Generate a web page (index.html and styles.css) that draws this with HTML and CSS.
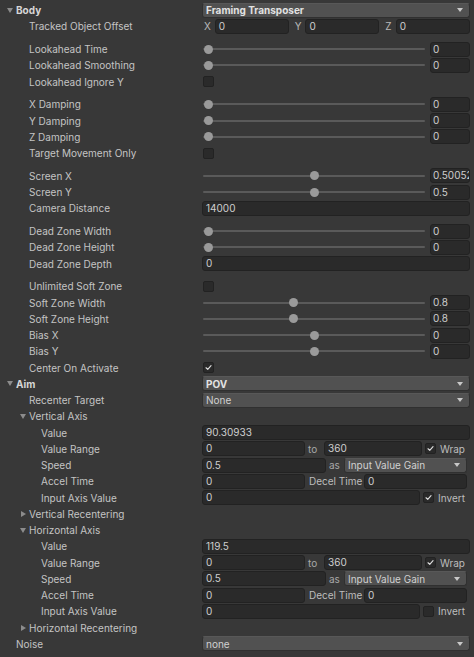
FILE: index.html
```html
<!DOCTYPE html>
<html lang="en">
<head>
    <meta charset="UTF-8">
    <title>Inspector - CinemachineVirtualCamera</title>
    <link rel="stylesheet" href="styles.css">
</head>
<body>
<div class="inspector">
    <!-- Body -->
    <div class="row">
        <div class="label l0 fold open bold"><span class="arrow"></span>Body</div>
        <div class="field"><div class="popup bold"><span class="popup-text">Framing Transposer</span><span class="popup-arrow"></span></div></div>
    </div>
    <div class="row">
        <div class="label l1">Tracked Object Offset</div>
        <div class="field vec3">
            <div class="axis"><span class="axis-name">X</span><div class="box">0</div></div>
            <div class="axis"><span class="axis-name">Y</span><div class="box">0</div></div>
            <div class="axis"><span class="axis-name">Z</span><div class="box">0</div></div>
        </div>
    </div>
    <div class="space"></div>
    <div class="row">
        <div class="label l1">Lookahead Time</div>
        <div class="field"><div class="slider"><span class="thumb" style="--v:0"></span></div><div class="box num">0</div></div>
    </div>
    <div class="row">
        <div class="label l1">Lookahead Smoothing</div>
        <div class="field"><div class="slider"><span class="thumb" style="--v:0"></span></div><div class="box num">0</div></div>
    </div>
    <div class="row">
        <div class="label l1">Lookahead Ignore Y</div>
        <div class="field"><span class="check"></span></div>
    </div>
    <div class="space"></div>
    <div class="row">
        <div class="label l1">X Damping</div>
        <div class="field"><div class="slider"><span class="thumb" style="--v:0"></span></div><div class="box num">0</div></div>
    </div>
    <div class="row">
        <div class="label l1">Y Damping</div>
        <div class="field"><div class="slider"><span class="thumb" style="--v:0"></span></div><div class="box num">0</div></div>
    </div>
    <div class="row">
        <div class="label l1">Z Damping</div>
        <div class="field"><div class="slider"><span class="thumb" style="--v:0"></span></div><div class="box num">0</div></div>
    </div>
    <div class="row">
        <div class="label l1">Target Movement Only</div>
        <div class="field"><span class="check"></span></div>
    </div>
    <div class="space"></div>
    <div class="row">
        <div class="label l1">Screen X</div>
        <div class="field"><div class="slider"><span class="thumb" style="--v:0.5"></span></div><div class="box num">0.50052</div></div>
    </div>
    <div class="row">
        <div class="label l1">Screen Y</div>
        <div class="field"><div class="slider"><span class="thumb" style="--v:0.5"></span></div><div class="box num">0.5</div></div>
    </div>
    <div class="row">
        <div class="label l1">Camera Distance</div>
        <div class="field"><div class="box">14000</div></div>
    </div>
    <div class="space"></div>
    <div class="row">
        <div class="label l1">Dead Zone Width</div>
        <div class="field"><div class="slider"><span class="thumb" style="--v:0"></span></div><div class="box num">0</div></div>
    </div>
    <div class="row">
        <div class="label l1">Dead Zone Height</div>
        <div class="field"><div class="slider"><span class="thumb" style="--v:0"></span></div><div class="box num">0</div></div>
    </div>
    <div class="row">
        <div class="label l1">Dead Zone Depth</div>
        <div class="field"><div class="box">0</div></div>
    </div>
    <div class="space"></div>
    <div class="row">
        <div class="label l1">Unlimited Soft Zone</div>
        <div class="field"><span class="check"></span></div>
    </div>
    <div class="row">
        <div class="label l1">Soft Zone Width</div>
        <div class="field"><div class="slider"><span class="thumb" style="--v:0.4"></span></div><div class="box num">0.8</div></div>
    </div>
    <div class="row">
        <div class="label l1">Soft Zone Height</div>
        <div class="field"><div class="slider"><span class="thumb" style="--v:0.4"></span></div><div class="box num">0.8</div></div>
    </div>
    <div class="row">
        <div class="label l1">Bias X</div>
        <div class="field"><div class="slider"><span class="thumb" style="--v:0.5"></span></div><div class="box num">0</div></div>
    </div>
    <div class="row">
        <div class="label l1">Bias Y</div>
        <div class="field"><div class="slider"><span class="thumb" style="--v:0.5"></span></div><div class="box num">0</div></div>
    </div>
    <div class="row">
        <div class="label l1">Center On Activate</div>
        <div class="field"><span class="check on"><svg viewBox="0 0 11 11"><polyline points="2.5,5.8 4.6,7.8 8.6,3.2"/></svg></span></div>
    </div>

    <!-- Aim -->
    <div class="row">
        <div class="label l0 fold open bold"><span class="arrow"></span>Aim</div>
        <div class="field"><div class="popup bold"><span class="popup-text">POV</span><span class="popup-arrow"></span></div></div>
    </div>
    <div class="row">
        <div class="label l1">Recenter Target</div>
        <div class="field"><div class="popup"><span class="popup-text">None</span><span class="popup-arrow"></span></div></div>
    </div>
    <div class="row">
        <div class="label l1 fold open"><span class="arrow"></span>Vertical Axis</div>
    </div>
    <div class="row">
        <div class="label l2">Value</div>
        <div class="field"><div class="box">90.30933</div></div>
    </div>
    <div class="row">
        <div class="label l2">Value Range</div>
        <div class="field">
            <div class="box half">0</div><span class="word to">to</span><div class="box">360</div>
            <span class="check on"><svg viewBox="0 0 11 11"><polyline points="2.5,5.8 4.6,7.8 8.6,3.2"/></svg></span><span class="word tail">Wrap</span>
        </div>
    </div>
    <div class="row">
        <div class="label l2">Speed</div>
        <div class="field">
            <div class="box wide">0.5</div><span class="word as">as</span>
            <div class="popup inset"><span class="popup-text">Input Value Gain</span><span class="popup-arrow"></span></div>
        </div>
    </div>
    <div class="row">
        <div class="label l2">Accel Time</div>
        <div class="field">
            <div class="box half">0</div><span class="word decel">Decel Time</span><div class="box inset">0</div>
        </div>
    </div>
    <div class="row">
        <div class="label l2">Input Axis Value</div>
        <div class="field">
            <div class="box">0</div>
            <span class="check on"><svg viewBox="0 0 11 11"><polyline points="2.5,5.8 4.6,7.8 8.6,3.2"/></svg></span><span class="word tail">Invert</span>
        </div>
    </div>
    <div class="row">
        <div class="label l1 fold"><span class="arrow"></span>Vertical Recentering</div>
    </div>
    <div class="row">
        <div class="label l1 fold open"><span class="arrow"></span>Horizontal Axis</div>
    </div>
    <div class="row">
        <div class="label l2">Value</div>
        <div class="field"><div class="box">119.5</div></div>
    </div>
    <div class="row">
        <div class="label l2">Value Range</div>
        <div class="field">
            <div class="box half">0</div><span class="word to">to</span><div class="box">360</div>
            <span class="check on"><svg viewBox="0 0 11 11"><polyline points="2.5,5.8 4.6,7.8 8.6,3.2"/></svg></span><span class="word tail">Wrap</span>
        </div>
    </div>
    <div class="row">
        <div class="label l2">Speed</div>
        <div class="field">
            <div class="box wide">0.5</div><span class="word as">as</span>
            <div class="popup inset"><span class="popup-text">Input Value Gain</span><span class="popup-arrow"></span></div>
        </div>
    </div>
    <div class="row">
        <div class="label l2">Accel Time</div>
        <div class="field">
            <div class="box half">0</div><span class="word decel">Decel Time</span><div class="box inset">0</div>
        </div>
    </div>
    <div class="row">
        <div class="label l2">Input Axis Value</div>
        <div class="field">
            <div class="box">0</div>
            <span class="check"></span><span class="word tail">Invert</span>
        </div>
    </div>
    <div class="row">
        <div class="label l1 fold"><span class="arrow"></span>Horizontal Recentering</div>
    </div>

    <!-- Noise -->
    <div class="row">
        <div class="label l0b">Noise</div>
        <div class="field"><div class="popup"><span class="popup-text">none</span><span class="popup-arrow"></span></div></div>
    </div>
</div>
</body>
</html>
```

FILE: styles.css
```css
:root { --bg: #383838; --text: #c4c4c4; --bright: #d6d6d6; --field: #2a2a2a; --field-border: #222; --popup: #515151; --muted: #8c8c8c; }
* { box-sizing: border-box; }
body { margin: 0; background: var(--bg); color: var(--text); font-family: Inter, "Noto Sans", sans-serif; font-size: 10px; }
.inspector { padding: 2px 4px 0 0; }
.row { display: flex; align-items: center; height: 16.25px; }
.space { height: 6.5px; }

/* labels + foldouts */
.label { width: 202px; flex: none; display: flex; align-items: center; white-space: nowrap; overflow: hidden; }
.l0 { padding-left: 7px; }
.l0b { padding-left: 16px; }
.l1 { padding-left: 29px; }
.l2 { padding-left: 41px; }
.l1.fold { padding-left: 20px; }
.bold { font-weight: 700; color: var(--bright); }
.arrow { width: 9px; flex: none; display: flex; align-items: center; }
.arrow::before { content: ''; border-style: solid; border-color: transparent; border-width: 3px 0 3px 5px; border-left-color: var(--muted); margin-left: 1px; }
.fold.open .arrow::before { border-width: 5px 3px 0 3px; border-color: var(--muted) transparent transparent transparent; margin-left: 0; }

/* value column */
.field { flex: 1; min-width: 0; display: flex; align-items: center; height: 15px; }
.box { flex: 1; min-width: 0; height: 15px; line-height: 13px; padding: 0 3px; background: var(--field); border: 1px solid var(--field-border); border-radius: 3px; color: #cfcfcf; white-space: nowrap; overflow: hidden; }
.box.num { flex: none; width: 40px; margin-left: 5px; padding: 0 2px; }
.box.half { flex: none; width: 103px; }
.box.wide { flex: none; width: 124px; }
.box.inset { margin-right: 3px; }

.popup { flex: 1; min-width: 0; height: 15px; display: flex; align-items: center; padding: 0 6px 0 3px; background: var(--popup); border: 1px solid #303030; border-top-color: #585858; border-radius: 3px; color: #d0d0d0; }
.popup.bold { color: #e2e2e2; }
.popup-text { flex: 1; white-space: nowrap; overflow: hidden; }
.popup-arrow { flex: none; border-style: solid; border-width: 4px 3.5px 0 3.5px; border-color: #c8c8c8 transparent transparent transparent; }
.popup.inset { margin-right: 3px; }

/* sliders */
.slider { flex: 1; position: relative; height: 15px; margin-left: 1px; }
.slider::before { content: ''; position: absolute; left: 0; right: 0; top: 6.5px; height: 2px; background: #5a5a5a; border-radius: 1px; }
.thumb { position: absolute; top: 3px; left: calc(var(--v) * (100% - 9px) + 0.5px); width: 9px; height: 9px; border-radius: 50%; background: #9a9a9a; }

/* vector3 */
.vec3 { gap: 4px; }
.axis { flex: 1; min-width: 0; display: flex; align-items: center; height: 15px; }
.axis-name { flex: none; padding: 0 4px 0 2px; color: #b8b8b8; }

/* toggles */
.check { flex: none; width: 11px; height: 11px; margin-left: 1px; background: var(--field); border: 1px solid var(--field-border); border-radius: 2px; display: flex; }
.check svg { width: 100%; height: 100%; }
.check polyline { fill: none; stroke: #e0e0e0; stroke-width: 1.4; stroke-linecap: round; stroke-linejoin: round; }
.field .box + .check { margin-left: 3px; }

/* inline captions */
.word { flex: none; white-space: nowrap; color: #bdbdbd; }
.to { width: 19px; padding-left: 3px; color: #a8a8a8; }
.as { width: 18px; padding-left: 3px; color: #a8a8a8; }
.decel { width: 59px; padding-left: 4px; }
.tail { padding-left: 4px; margin-right: 5px; }
```
